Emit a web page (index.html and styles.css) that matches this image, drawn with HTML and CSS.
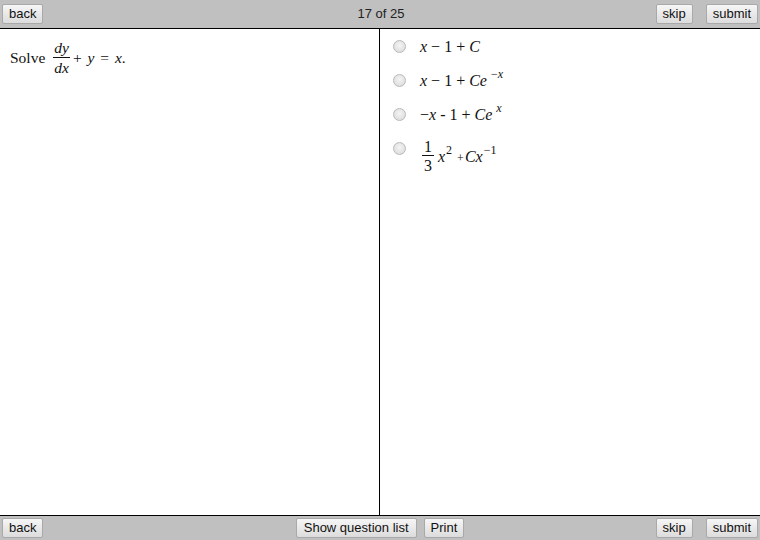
FILE: index.html
```html
<!DOCTYPE html>
<html>
<head>
<meta charset="utf-8">
<link rel="stylesheet" href="styles.css">
</head>
<body>
<div class="page">
  <div class="bar top">
    <div class="left"><button class="btn">back</button></div>
    <div class="center"><span class="count">17 of 25</span></div>
    <div class="right"><button class="btn">skip</button><button class="btn">submit</button></div>
  </div>
  <div class="main">
    <div class="pane question">
      <div class="qline">
        <span class="solve">Solve</span>
        <span class="frac"><span class="num"><i>dy</i></span><span class="den"><i>dx</i></span></span>
        <span class="expr">+ <i>y</i> = <i>x</i>.</span>
      </div>
    </div>
    <div class="pane answers">
      <div class="opt"><span class="radio"></span><span class="m"><i>x</i> − 1 + <i>C</i></span></div>
      <div class="opt"><span class="radio"></span><span class="m"><i>x</i> − 1 + <i>Ce</i><sup class="gap">−<i>x</i></sup></span></div>
      <div class="opt"><span class="radio"></span><span class="m">−<i>x</i> - 1 + <i>Ce</i><sup class="gap"><i>x</i></sup></span></div>
      <div class="opt frac-opt"><span class="radio"></span><span class="m"><span class="frac small"><span class="num">1</span><span class="den">3</span></span><span class="tail"><i>x</i><sup>2</sup><span class="sm">+</span><i>Cx</i><sup>−1</sup></span></span></div>
    </div>
  </div>
  <div class="bar bottom">
    <div class="left"><button class="btn">back</button></div>
    <div class="center"><button class="btn wide">Show question list</button><button class="btn">Print</button></div>
    <div class="right"><button class="btn">skip</button><button class="btn">submit</button></div>
  </div>
</div>
</body>
</html>
```

FILE: styles.css
```css
html, body { margin: 0; padding: 0; }
body { width: 760px; height: 540px; overflow: hidden; background: #fff; font-family: "Liberation Sans", Arial, sans-serif; }
.page { display: flex; flex-direction: column; height: 540px; }
.bar { display: grid; grid-template-columns: 1fr auto 1fr; align-items: start; background: #c0c0c0; padding: 0 2px; box-sizing: border-box; }
.bar.top { height: 29px; border-bottom: 1px solid #000; padding-top: 4px; }
.bar.bottom { height: 25px; border-top: 1px solid #000; padding-top: 2px; }
.left { display: flex; }
.center { display: flex; justify-content: center; gap: 7px; }
.right { display: flex; justify-content: flex-end; gap: 13px; }
.count { font-size: 13px; color: #222; line-height: 19px; margin-left: 2px; }
.btn { font-family: "Liberation Sans", Arial, sans-serif; font-size: 13px; color: #111; height: 20px; padding: 0 6px; margin: 0; border: 1px solid #a9a9a9; border-radius: 2px; background: linear-gradient(#f6f6f6, #dcdcdc); line-height: 18px; }
.btn.wide { padding: 0 7px; }
.main { flex: 1; display: flex; }
.pane { box-sizing: border-box; }
.question { width: 380px; border-right: 1px solid #000; padding: 10px 10px; font-family: "Liberation Serif", "Times New Roman", serif; font-size: 15.5px; color: #111; }
.qline { display: flex; align-items: center; }
.solve { margin-right: 8px; }
.frac { display: inline-flex; flex-direction: column; align-items: center; margin-right: 2px; }
.frac .num { border-bottom: 1px solid #111; padding: 0 1px; line-height: 18px; }
.frac .den { line-height: 19px; }
.expr { margin-left: 1px; word-spacing: 2px; }
.answers { flex: 1; padding: 9px 0 0 13px; font-family: "Liberation Serif", "Times New Roman", serif; font-size: 16px; color: #111; }
.opt { display: flex; align-items: flex-start; height: 34px; }
.radio { width: 11px; height: 11px; border-radius: 50%; border: 1px solid #b9b9b9; background: radial-gradient(circle at 50% 40%, #f4f4f4, #d8d8d8); margin-top: 2px; margin-right: 14px; flex: none; }
.m { line-height: 18px; white-space: nowrap; }
.m sup { font-size: 12px; vertical-align: 8px; line-height: 0; margin-left: 1px; }
.m sup.gap { margin-left: 4px; }
.frac-opt .m { display: flex; align-items: center; margin-top: -2px; margin-left: 2px; }
.frac.small { margin-right: 4px; }
.frac.small .num { line-height: 17px; padding: 0 2px; }
.frac.small .den { line-height: 19px; }
.tail { display: inline-block; padding-top: 2px; }
.sm { font-size: 12px; margin: 0 1px 0 5px; }
```
